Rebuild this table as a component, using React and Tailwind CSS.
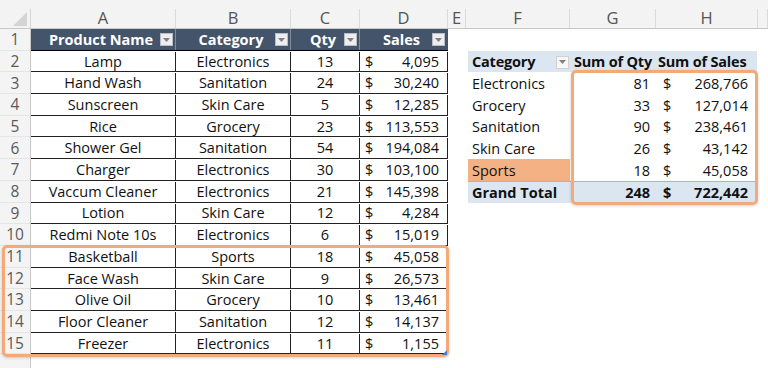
const tableRows = [
  ["Lamp", "Electronics", 13, "4,095"],
  ["Hand Wash", "Sanitation", 24, "30,240"],
  ["Sunscreen", "Skin Care", 5, "12,285"],
  ["Rice", "Grocery", 23, "113,553"],
  ["Shower Gel", "Sanitation", 54, "194,084"],
  ["Charger", "Electronics", 30, "103,100"],
  ["Vaccum Cleaner", "Electronics", 21, "145,398"],
  ["Lotion", "Skin Care", 12, "4,284"],
  ["Redmi Note 10s", "Electronics", 6, "15,019"],
  ["Basketball", "Sports", 18, "45,058"],
  ["Face Wash", "Skin Care", 9, "26,573"],
  ["Olive Oil", "Grocery", 10, "13,461"],
  ["Floor Cleaner", "Sanitation", 12, "14,137"],
  ["Freezer", "Electronics", 11, "1,155"]
];

const pivotRows = [
  ["Electronics", 81, "268,766"],
  ["Grocery", 33, "127,014"],
  ["Sanitation", 90, "238,461"],
  ["Skin Care", 26, "43,142"],
  ["Sports", 18, "45,058"]
];

const columns = [
  ["A", "w-[145px]"],
  ["B", "w-[115px]"],
  ["C", "w-[69px]"],
  ["D", "w-[88px]"],
  ["E", "w-[18px]"],
  ["F", "w-[104px]"],
  ["G", "w-[86px]"],
  ["H", "w-[102px]"],
  ["", "w-[10px]"]
];

function FilterButton({ light }) {
  return (
    <span
      className={
        light
          ? "flex h-[13px] w-[13px] items-center justify-center border border-[#d0d0d0] bg-[#f7f7f7]"
          : "flex h-[13px] w-[13px] items-center justify-center border border-[#b9bec6] bg-[#eeeeee]"
      }
    >
      <svg width="7" height="4" viewBox="0 0 7 4">
        <path d="M0 0h7L3.5 4z" fill="#808080" />
      </svg>
    </span>
  );
}

function HeaderCell({ label, width, last }) {
  return (
    <div
      className={`relative flex h-full items-center justify-center pt-[1px] ${width} ${
        last ? "border-r border-[#44546a]" : "border-r border-[#7f8b9b]"
      }`}
    >
      <span className="pr-[4px]">{label}</span>
      <span className="absolute right-[2px] top-[4px]">
        <FilterButton />
      </span>
    </div>
  );
}

export default function App() {
  return (
    <div className="relative h-[368px] w-[768px] overflow-hidden bg-white font-['Open_Sans',sans-serif] text-[14.5px] text-[#111]">
      <div className="h-[9px] bg-[#f3f3f3]" />

      <div className="flex h-[20px] border-b border-[#c8c8c8] bg-[#f3f3f3] text-[16.5px] text-[#555]">
        <div className="flex w-[31px] items-end justify-end border-r border-[#d6d6d6] pb-[2px] pr-[3px]">
          <svg width="14" height="14" viewBox="0 0 14 14">
            <path d="M14 0v14H0z" fill="#d4d4d4" />
          </svg>
        </div>
        {columns.map(([letter, width]) => (
          <div
            key={letter + width}
            className={`flex items-center justify-center border-r border-[#dadada] leading-none ${width}`}
          >
            {letter}
          </div>
        ))}
      </div>

      <div className="flex">
        <div className="w-[31px] border-r border-[#c8c8c8] bg-[#f4f4f4] text-[15.5px] text-[#5a5a5a]">
          {Array.from({ length: 15 }, (_, i) => (
            <div key={i} className="flex h-[21.7px] items-center justify-center border-b border-[#e4e4e4] pt-[1px]">
              {i + 1}
            </div>
          ))}
          <div className="h-[20px]" />
        </div>

        <div className="w-[417px]">
          <div className="flex h-[21.7px] border-b border-black bg-[#44546a] font-bold text-white">
            <HeaderCell label="Product Name" width="w-[145px]" />
            <HeaderCell label="Category" width="w-[115px]" />
            <HeaderCell label="Qty" width="w-[69px]" />
            <HeaderCell label="Sales" width="w-[88px]" last />
          </div>
          {tableRows.map(([name, category, qty, sales]) => (
            <div key={name} className="flex h-[21.7px] border-b border-[#222] pt-[1px]">
              <div className="flex w-[145px] items-center justify-center border-r border-[#222]">{name}</div>
              <div className="flex w-[115px] items-center justify-center border-r border-[#222]">{category}</div>
              <div className="flex w-[69px] items-center justify-center border-r border-[#222]">{qty}</div>
              <div className="flex w-[88px] items-center justify-between border-r border-[#222] pl-[5px] pr-[8px]">
                <span>$</span>
                <span>{sales}</span>
              </div>
            </div>
          ))}
        </div>

        <div className="w-[18px]" />

        <div className="w-[292px] pl-[2px] pr-[1px]">
          <div className="h-[21.7px]" />
          <div className="flex h-[21.7px] items-center bg-[#dce6f1] pt-[1px] font-bold tracking-[-0.2px]">
            <div className="flex w-[102px] items-center justify-between pl-[4px] pr-[1px]">
              <span>Category</span>
              <FilterButton light />
            </div>
            <div className="w-[86px] whitespace-nowrap pl-[4px]">Sum of Qty</div>
            <div className="flex-1 whitespace-nowrap pl-[2px]">Sum of Sales</div>
          </div>
          {pivotRows.map(([category, qty, sales]) => (
            <div key={category} className="flex h-[21.7px] items-center">
              <div
                className={
                  category === "Sports"
                    ? "flex h-full w-[102px] items-center bg-[#f4b183] pl-[4px] pt-[1px]"
                    : "flex h-full w-[102px] items-center pl-[4px] pt-[1px]"
                }
              >
                {category}
              </div>
              <div className="w-[86px] pr-[6px] pt-[1px] text-right">{qty}</div>
              <div className="flex flex-1 justify-between pl-[7px] pr-[9px] pt-[1px]">
                <span>$</span>
                <span>{sales}</span>
              </div>
            </div>
          ))}
          <div className="flex h-[21.7px] items-center border-t border-[#9bb7dd] bg-[#dce6f1] pt-[1px] font-bold">
            <div className="w-[102px] pl-[4px]">Grand Total</div>
            <div className="w-[86px] pr-[6px] text-right">248</div>
            <div className="flex flex-1 justify-between pl-[7px] pr-[9px]">
              <span>$</span>
              <span>722,442</span>
            </div>
          </div>
        </div>
      </div>

      <div className="pointer-events-none absolute left-[2px] top-[245px] h-[112px] w-[447px] rounded-[5px] border-[3px] border-[#f3aa78] shadow-[0_1px_3px_rgba(0,0,0,0.18)]" />
      <div className="pointer-events-none absolute left-[571px] top-[70px] h-[135px] w-[187px] rounded-[5px] border-[3px] border-[#f3aa78] shadow-[0_1px_3px_rgba(0,0,0,0.18)]" />
      <svg className="absolute left-[442px] top-[350px]" width="5" height="5" viewBox="0 0 5 5">
        <path d="M5 0v5H0z" fill="#4a7ebb" />
      </svg>
    </div>
  );
}
